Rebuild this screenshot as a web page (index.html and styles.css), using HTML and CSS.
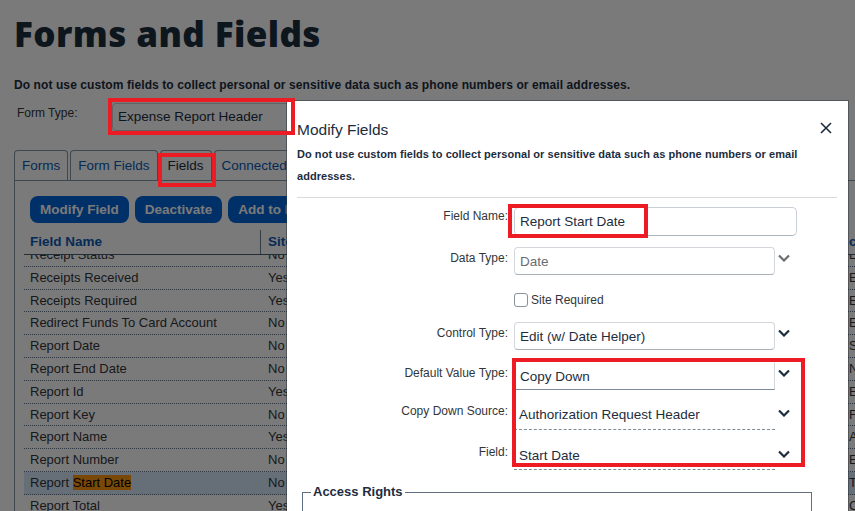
FILE: index.html
```html
<!DOCTYPE html>
<html>
<head>
    <meta charset="UTF-8">
    <meta name="viewport" content="width=device-width, initial-scale=1">
    <title>Forms and Fields</title>
    <link rel="stylesheet" href="styles.css">
</head>
<body>
    <!-- Página de fundo -->
    <div class="page">
        <h1 class="page-title">Forms and Fields</h1>
        <p class="page-notice">Do not use custom fields to collect personal or sensitive data such as phone numbers or email addresses.</p>

        <div class="form-type">
            <span class="form-type-label">Form Type:</span>
            <div class="form-type-select">Expense Report Header</div>
        </div>

        <ul class="tabs">
            <li class="tab">Forms</li>
            <li class="tab">Form Fields</li>
            <li class="tab tab-active">Fields</li>
            <li class="tab">Connected Lists</li>
        </ul>

        <div class="tab-panel">
            <div class="actions">
                <button class="btn">Modify Field</button>
                <button class="btn">Deactivate</button>
                <button class="btn">Add to Form</button>
            </div>

            <div class="grid">
                <div class="grid-head">
                    <div class="th">Field Name</div>
                    <div class="th th-sep">Site Required</div>
                    <div class="th">control Type</div>
                </div>
                <div class="grid-body">
                    <div class="grid-rows">
                        <div class="tr"><div class="td">Receipt Status</div><div class="td">No</div><div class="td">Edit</div></div>
                        <div class="tr"><div class="td">Receipts Received</div><div class="td">Yes</div><div class="td">Edit</div></div>
                        <div class="tr"><div class="td">Receipts Required</div><div class="td">Yes</div><div class="td">Edit</div></div>
                        <div class="tr"><div class="td">Redirect Funds To Card Account</div><div class="td">No</div><div class="td">Edit</div></div>
                        <div class="tr"><div class="td">Report Date</div><div class="td">No</div><div class="td">Static</div></div>
                        <div class="tr"><div class="td">Report End Date</div><div class="td">No</div><div class="td">None</div></div>
                        <div class="tr"><div class="td">Report Id</div><div class="td">Yes</div><div class="td">Edit</div></div>
                        <div class="tr"><div class="td">Report Key</div><div class="td">No</div><div class="td">Free</div></div>
                        <div class="tr"><div class="td">Report Name</div><div class="td">Yes</div><div class="td">Auto</div></div>
                        <div class="tr"><div class="td">Report Number</div><div class="td">No</div><div class="td">Edit</div></div>
                        <div class="tr tr-selected"><div class="td">Report <span class="find">Start Date</span></div><div class="td">No</div><div class="td">Text</div></div>
                        <div class="tr"><div class="td">Report Total</div><div class="td">Yes</div><div class="td">Calculated</div></div>
                    </div>
                </div>
            </div>
        </div>
    </div>

    <div class="overlay"></div>

    <!-- Janela Modify Fields -->
    <div class="modal">
        <div class="modal-head">
            <span class="modal-title">Modify Fields</span>
            <svg class="modal-close" viewBox="0 0 12 12"><path d="M1 1L11 11M11 1L1 11" stroke="#1d2d3e" stroke-width="1.6" fill="none"/></svg>
        </div>
        <p class="modal-notice">Do not use custom fields to collect personal or sensitive data such as phone numbers or email addresses.</p>
        <hr class="modal-rule">

        <div class="modal-form">
            <div class="field-row row-name">
                <label class="field-label">Field Name:</label>
                <div class="text-input">Report Start Date</div>
            </div>
            <div class="field-row">
                <label class="field-label">Data Type:</label>
                <div class="select-wrap">
                    <div class="select-box select-disabled">Date</div>
                    <svg class="chevron" viewBox="0 0 12 8"><path d="M1 1.5L6 6.5L11 1.5" stroke="#6a6d70" stroke-width="2.2" fill="none"/></svg>
                </div>
            </div>
            <div class="field-row row-check">
                <span></span>
                <div class="check">
                    <span class="check-box"></span>
                    <span class="check-text">Site Required</span>
                </div>
            </div>
            <div class="field-row row-control">
                <label class="field-label">Control Type:</label>
                <div class="select-wrap">
                    <div class="select-box">Edit (w/ Date Helper)</div>
                    <svg class="chevron" viewBox="0 0 12 8"><path d="M1 1.5L6 6.5L11 1.5" stroke="#1d2d3e" stroke-width="2.2" fill="none"/></svg>
                </div>
            </div>
            <div class="field-row row-default">
                <label class="field-label">Default Value Type:</label>
                <div class="select-wrap">
                    <div class="select-box select-flat">Copy Down</div>
                    <svg class="chevron" viewBox="0 0 12 8"><path d="M1 1.5L6 6.5L11 1.5" stroke="#1d2d3e" stroke-width="2.2" fill="none"/></svg>
                </div>
            </div>
            <div class="field-row row-source">
                <label class="field-label">Copy Down Source:</label>
                <div class="select-wrap">
                    <div class="select-plain">Authorization Request Header</div>
                    <svg class="chevron chevron-low" viewBox="0 0 12 8"><path d="M1 1.5L6 6.5L11 1.5" stroke="#1d2d3e" stroke-width="2.2" fill="none"/></svg>
                </div>
            </div>
            <div class="field-row row-field">
                <label class="field-label">Field:</label>
                <div class="select-wrap">
                    <div class="select-plain">Start Date</div>
                    <svg class="chevron chevron-low" viewBox="0 0 12 8"><path d="M1 1.5L6 6.5L11 1.5" stroke="#1d2d3e" stroke-width="2.2" fill="none"/></svg>
                </div>
            </div>

            <fieldset class="access">
                <legend>Access Rights</legend>
            </fieldset>
        </div>
    </div>

    <!-- Marcações em vermelho -->
    <div class="mark mark-form-type"></div>
    <div class="mark mark-tab"></div>
    <div class="mark mark-name"></div>
    <div class="mark mark-defaults"></div>
</body>
</html>
```

FILE: styles.css
```css
/* Estilos gerais */
body {
    margin: 0;
    width: 855px;
    height: 511px;
    overflow: hidden;
    position: relative;
    font-family: "Liberation Sans", Arial, sans-serif;
    color: #32363a;
    background: #fff;
}

/* Página de fundo */
.page {
    padding-left: 14px;
    height: 511px;
    overflow: hidden;
}

.page-title {
    margin: 0;
    padding-top: 13px;
    font-family: "Open Sans", sans-serif;
    font-weight: 800;
    font-size: 35px;
    line-height: 42px;
    letter-spacing: 0.4px;
    color: #1d2d3e;
    white-space: nowrap;
}

.page-notice {
    margin: 22px 0 0;
    font-size: 12px;
    font-weight: bold;
    line-height: 16px;
    letter-spacing: 0.09px;
    color: #1d2d3e;
    white-space: nowrap;
}

.form-type {
    display: flex;
    margin-top: 10px;
    height: 28px;
}

.form-type-label {
    width: 95px;
    padding-left: 3px;
    font-size: 12px;
    line-height: 20px;
}

.form-type-select {
    width: 210px;
    height: 28px;
    box-sizing: border-box;
    border: 1px solid #c8cdd2;
    border-radius: 4px;
    padding-left: 5px;
    font-size: 13.5px;
    line-height: 26px;
    color: #1d2d3e;
}

/* Abas */
.tabs {
    list-style: none;
    margin: 19px 0 0;
    padding: 0;
    display: flex;
    height: 30px;
}

.tab {
    box-sizing: border-box;
    height: 30px;
    padding: 0 7px;
    margin-right: 2px;
    border: 1px solid #8396a8;
    border-bottom: none;
    border-radius: 4px 4px 0 0;
    font-size: 13.5px;
    line-height: 29px;
    color: #0a5bb5;
    white-space: nowrap;
}

.tab-active {
    color: #1d2d3e;
}

.tab-panel {
    border-top: 1px solid #8396a8;
    border-left: 1px solid #8396a8;
    padding: 15px 0 0 15px;
    height: 330px;
    overflow: hidden;
}

.actions {
    display: flex;
    gap: 6px;
}

.btn {
    height: 27px;
    padding: 0 10px;
    border: none;
    border-radius: 8px;
    background: #0064d9;
    color: #fff;
    font-family: "Liberation Sans", Arial, sans-serif;
    font-weight: bold;
    font-size: 13.5px;
    white-space: nowrap;
}

/* Tabela de campos */
.grid {
    margin: 7px 0 0 -6px;
}

.grid-head,
.tr {
    display: grid;
    grid-template-columns: 236px 581px 1fr;
}

.grid-head {
    height: 24px;
    border-bottom: 1px solid #475e75;
}

.th {
    padding-left: 6px;
    font-weight: bold;
    font-size: 13.5px;
    line-height: 24px;
    color: #0a5bb5;
    white-space: nowrap;
    overflow: hidden;
}

.th-sep {
    border-left: 1px solid #6a7d90;
    padding-left: 7px;
}

.th + .th + .th {
    padding-left: 8px;
}

.grid-body {
    height: 260px;
    overflow: hidden;
}

.grid-rows {
    margin-top: -11px;
}

.tr {
    height: 22.8px;
    box-sizing: border-box;
    border-bottom: 1px dotted #5e7388;
    font-size: 13px;
    line-height: 22px;
}

.td {
    padding-left: 6px;
    white-space: nowrap;
    overflow: hidden;
}

.td + .td {
    padding-left: 8px;
}

.tr-selected {
    background: #d6e8fa;
}

.find {
    background: #ff9a10;
    color: #000;
}

/* Fundo escurecido */
.overlay {
    position: absolute;
    inset: 0;
    background: rgba(0, 0, 0, 0.52);
}

/* Janela modal */
.modal {
    position: absolute;
    left: 287px;
    top: 101px;
    width: 561px;
    height: 410px;
    overflow: hidden;
    box-sizing: border-box;
    padding: 0 11px 0 10px;
    background: #fff;
    box-shadow: 0 0 0 1px rgba(40, 50, 60, 0.5);
}

.modal-head {
    display: flex;
    justify-content: space-between;
    padding-top: 19px;
    height: 20px;
}

.modal-title {
    font-size: 15.5px;
    line-height: 20px;
    color: #1d2d3e;
}

.modal-close {
    width: 12px;
    height: 12px;
    margin: 2px 5px 0 0;
}

.modal-notice {
    margin: 3px 0 0;
    font-size: 11px;
    font-weight: bold;
    line-height: 22px;
    letter-spacing: 0.05px;
    color: #1d2d3e;
}

.modal-rule {
    border: none;
    border-top: 1px solid #d9dadb;
    margin: 10px 0 0;
}

.modal-form {
    padding-top: 9px;
}

.field-row {
    display: grid;
    grid-template-columns: 211px 1fr;
    column-gap: 6px;
    align-items: start;
    margin-bottom: 11px;
}

.field-label {
    text-align: right;
    font-size: 12px;
    line-height: 14px;
    padding-top: 4px;
    color: #32363a;
    white-space: nowrap;
}

.row-name .field-label {
    padding-top: 2px;
}

.text-input {
    width: 283px;
    height: 29px;
    box-sizing: border-box;
    border: 1px solid #c9cfd5;
    border-bottom-color: #a9b3bd;
    border-radius: 5px;
    padding-left: 5px;
    font-size: 13.5px;
    line-height: 27px;
    color: #1d2d3e;
}

.select-wrap {
    display: flex;
    align-items: flex-start;
}

.select-box {
    width: 261px;
    height: 28px;
    box-sizing: border-box;
    border: 1px solid #d3d7dc;
    border-bottom-color: #a8b1ba;
    border-radius: 4px;
    padding-left: 5px;
    font-size: 13.5px;
    line-height: 27px;
    color: #1d2d3e;
}

.select-disabled {
    color: #6a6d70;
}

.select-flat {
    border-radius: 0;
    border-top-color: #fff;
    border-left-color: #fff;
    border-bottom-color: #7d8a97;
}

.select-plain {
    width: 261px;
    box-sizing: border-box;
    border-bottom: 1px dashed #7d8a97;
    padding-left: 5px;
    font-size: 13.5px;
    color: #1d2d3e;
}

.row-source .select-plain {
    height: 30px;
    line-height: 30px;
}

.row-field .select-plain {
    height: 29px;
    line-height: 29px;
}

.chevron {
    width: 12px;
    height: 8px;
    margin: 7px 0 0 3px;
}

.chevron-low {
    margin-top: 9px;
}

.row-check {
    margin-bottom: 8px;
}

.check {
    display: flex;
    align-items: center;
    height: 28px;
}

.check-box {
    width: 14px;
    height: 14px;
    box-sizing: border-box;
    border: 1px solid #89919a;
    border-radius: 3px;
    margin-right: 3px;
}

.check-text {
    font-size: 12px;
    color: #32363a;
}

.row-control {
    margin-bottom: 12px;
}

.row-default {
    margin-bottom: 10px;
}

.row-field {
    margin-bottom: 0;
}

.access {
    margin: 14px 0 0 5px;
    width: 510px;
    height: 40px;
    box-sizing: border-box;
    border: 1px solid #5f6f7f;
    padding: 0 8px;
}

.access legend {
    padding: 0 2px;
    font-size: 13px;
    font-weight: bold;
    line-height: 16px;
    color: #1d2d3e;
}

/* Marcações em vermelho */
.mark {
    position: absolute;
    box-sizing: border-box;
    border: 4px solid #ed1c24;
}

.mark-form-type {
    left: 108px;
    top: 98px;
    width: 187px;
    height: 37px;
}

.mark-tab {
    left: 158px;
    top: 153px;
    width: 58px;
    height: 34px;
}

.mark-name {
    left: 508px;
    top: 204px;
    width: 140px;
    height: 34px;
}

.mark-defaults {
    left: 512px;
    top: 358px;
    width: 293px;
    height: 109px;
}
```
